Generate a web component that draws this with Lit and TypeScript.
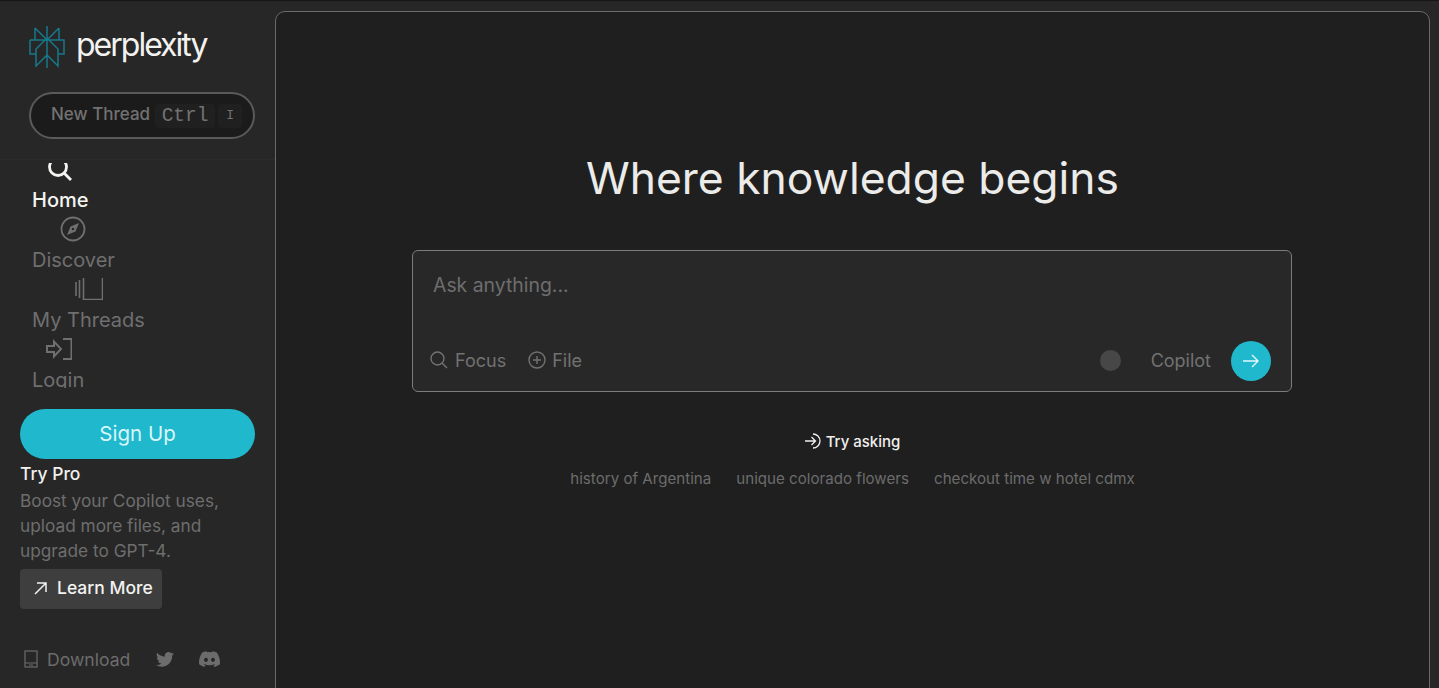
import { LitElement, html, css } from "lit";
import { customElement } from "lit/decorators.js";

@customElement("app-root")
export class AppRoot extends LitElement {
  static styles = css`
    :host { display: flex; width: 100%; height: 100vh; overflow: hidden; background: #272727; box-sizing: border-box;
      border-top: 1px solid #161616; font-family: Inter, "Noto Sans", sans-serif; color: #e8e8e6; }
    * { box-sizing: border-box; }
    svg { display: block; fill: none; stroke: currentColor; }
    .side { width: 275px; flex: none; display: flex; flex-direction: column; padding: 0 20px; }
    .logo { display: flex; gap: 11px; padding: 24px 0 0 10px; height: 91px; align-items: flex-start; color: #f2f2f0; }
    .logo svg { color: #17788a; flex: none; margin-left: -1px; }
    .word { font-size: 32px; letter-spacing: -2px; line-height: 40px; font-weight: 400; }
    .newthread { height: 47px; width: 226px; margin-left: 9px; border-radius: 24px; background: #1b1b1b; border: 2px solid #5a5a5a;
      display: flex; align-items: center; padding-left: 20px; color: #727272; font-size: 17px; font-weight: 500; white-space: nowrap; }
    .nt { margin-bottom: 3px; }
    .kbd { font-family: "Liberation Mono", "DejaVu Sans Mono", monospace; background: #202020; border-radius: 4px; color: #727272;
      display: flex; align-items: center; justify-content: center; height: 24px; font-weight: 400; }
    .k1 { margin-left: 5px; width: 60px; font-size: 19.5px; }
    .k2 { margin-left: 3px; width: 24px; font-size: 13px; }
    .rule { height: 1px; background: #2c2c2c; margin: 20px -20px 3px; }
    .nav { height: 225px; overflow: hidden; padding-left: 12px; flex: none; }
    .list { margin-top: -9px; display: flex; flex-direction: column; }
    .item { height: 60px; display: flex; flex-direction: column; align-items: center; width: max-content; color: #6f6f6f; font-size: 20px; font-weight: 400; }
    .item.on { color: #f4f4f2; font-weight: 500; }
    .ic { height: 30px; display: flex; align-items: center; }
    .lb { height: 30px; line-height: 32px; }
    .signup { margin-top: 21px; height: 50px; border-radius: 25px; background: #20b8cd; color: #d8f6fa; font-size: 20.5px; font-weight: 400;
      display: flex; align-items: center; justify-content: center; flex: none; padding-bottom: 2px; }
    .pro { margin-top: 4px; font-size: 17.5px; font-weight: 500; line-height: 22px; color: #f0f0ee; }
    .desc { margin-top: 3px; font-size: 17.25px; line-height: 25px; color: #6e6e6e; white-space: nowrap; }
    .learn { margin-top: 6px; width: 142px; height: 40px; border-radius: 4px; background: #3e3e3e; color: #f2f2f0; font-size: 17.5px; font-weight: 500;
      display: flex; align-items: center; padding: 0 0 3px 13px; gap: 8px; }
    .foot { margin-top: 35px; display: flex; align-items: center; color: #6c6c6c; font-size: 17.6px; padding-left: 4px; height: 30px; }
    .foot .dl { margin-left: 9px; }
    .tw { margin-left: 26px; fill: currentColor; stroke: none; }
    .dc { margin-left: 25px; fill: currentColor; stroke: none; }
    .main { flex: none; width: 1155px; margin-top: 10px; height: 700px; background: #1f1f1f; border: 1px solid #6a6a6a; border-radius: 10px;
      display: flex; flex-direction: column; align-items: center; }
    h1 { margin: 136px 0 0; font-size: 44.4px; font-weight: 400; line-height: 60px; color: #ebebe9; }
    .box { margin: 42px 1px 0 0; width: 880px; height: 142px; background: #282828; border: 1px solid #7c7c7c; border-radius: 6px; display: flex; flex-direction: column; padding: 0 20px 0 17px; }
    .ph { margin: 22px 0 0 3px; height: 24px; line-height: 24px; font-size: 19.4px; color: #6e6e6e; }
    .tools { margin-top: 44px; display: flex; align-items: center; height: 40px; color: #727272; font-size: 18px; }
    .tool { display: flex; align-items: center; gap: 7px; margin-right: 22px; margin-bottom: 2px; }
    .tool.file { gap: 6px; }
    .spacer { flex: 1; }
    .dot { width: 21px; height: 21px; border-radius: 50%; background: #474747; margin: 0 29px 2px 0; transform: translateX(-1px); }
    .lab { margin-bottom: 2px; }
    .send { width: 40px; height: 40px; border-radius: 50%; background: #20b8cd; color: #e4f8fb; display: flex; align-items: center; justify-content: center; margin-left: 20px; }
    .try { margin-top: 37px; display: flex; align-items: center; gap: 4px; font-size: 15px; font-weight: 500; color: #f0f0ee; height: 24px; }
    .sugg { margin-top: 16px; display: flex; gap: 25px; font-size: 15.13px; color: #6c6c6c; }
  `;

  private logo() {
    return html`<svg width="36" height="44" viewBox="0 0 36 44" stroke-width="1.5">
      <path d="M18 1V43M6 3L18 15L30 3M6 3V15M30 3V15M1 15H35V29H29M1 15V29H7M7 41V24L18 13L29 24V41L18 30L7 41Z"/>
    </svg>`;
  }

  render() {
    return html`
      <aside class="side">
        <div class="logo">${this.logo()}<span class="word">perplexity</span></div>
        <div class="newthread"><span class="nt">New Thread</span><span class="kbd k1">Ctrl</span><span class="kbd k2">I</span></div>
        <div class="rule"></div>
        <nav class="nav"><div class="list">
          <div class="item on"><span class="ic"><svg width="26" height="26" viewBox="0 0 26 26" stroke-width="2.8"><circle cx="11" cy="11" r="8.5"/><path d="M17 17L24 24"/></svg></span><span class="lb">Home</span></div>
          <div class="item"><span class="ic"><svg width="26" height="26" viewBox="0 0 26 26" stroke-width="1.8"><circle cx="13" cy="13" r="11.5"/><path fill-rule="evenodd" stroke="none" fill="currentColor" d="M19 7L15.500 15.500L7 19L10.500 10.500ZM13 11.800A1.200 1.200 0 1 0 13 14.200A1.200 1.200 0 1 0 13 11.800Z"/></svg></span><span class="lb">Discover</span></div>
          <div class="item"><span class="ic"><svg width="29" height="22" viewBox="0 0 29 22" stroke-width="1.6"><path d="M2 4V18M5.500 2V20M9.500 0V21.500H28.500V0"/></svg></span><span class="lb">My Threads</span></div>
          <div class="item"><span class="ic"><svg width="27" height="22" viewBox="0 0 27 22" stroke-width="2"><path d="M2 8H9V3.500L16 11L9 18.500V14H2Z"/><path d="M18 1H26.500V21H18"/></svg></span><span class="lb">Login</span></div>
        </div></nav>
        <div class="signup">Sign Up</div>
        <div class="pro">Try Pro</div>
        <div class="desc">Boost your Copilot uses,<br>upload more files, and<br>upgrade to GPT-4.</div>
        <div class="learn"><svg width="16" height="16" viewBox="0 0 16 16" stroke-width="1.5"><path d="M2 14L13 3M4 3H13V12"/></svg>Learn More</div>
        <div class="foot">
          <svg width="14" height="18" viewBox="0 0 14 18" stroke-width="1.2"><rect x="1" y="1" width="12" height="16"/><path d="M1 13H13M5 15H9"/></svg>
          <span class="dl">Download</span>
          <svg class="tw" width="18" height="15" viewBox="0 0 24 20"><path d="M24 2.400a10 10 0 0 1-2.800.8A5 5 0 0 0 23.300.5a10 10 0 0 1-3.100 1.200 4.900 4.900 0 0 0-8.400 4.500A14 14 0 0 1 1.700.9a4.900 4.900 0 0 0 1.500 6.600 4.900 4.900 0 0 1-2.200-.6c0 2.400 1.700 4.500 3.900 5a5 5 0 0 1-2.200.1 4.900 4.900 0 0 0 4.600 3.400A10 10 0 0 1 0 17.400 14 14 0 0 0 7.500 19.600c9.100 0 14.300-7.700 14-14.600A10 10 0 0 0 24 2.400Z"/></svg>
          <svg class="dc" width="21" height="16" viewBox="0 0 24 18"><path d="M20.300 1.500A20 20 0 0 0 15.400 0l-.6 1.300a18 18 0 0 0-5.500 0L8.600 0A20 20 0 0 0 3.700 1.500C.6 6.100-.3 10.600.1 15a20 20 0 0 0 6 3l1.300-2a13 13 0 0 1-2-1l.5-.4a14 14 0 0 0 12.200 0l.5.400a13 13 0 0 1-2 1l1.300 2a20 20 0 0 0 6-3c.5-5.100-.8-9.600-3.600-13.500ZM8 12.300c-1.200 0-2.200-1.100-2.200-2.400S6.800 7.500 8 7.500s2.200 1.100 2.200 2.400-1 2.400-2.200 2.400Zm8 0c-1.200 0-2.200-1.100-2.200-2.400s1-2.400 2.200-2.400 2.200 1.100 2.200 2.400-1 2.400-2.200 2.400Z"/></svg>
        </div>
      </aside>
      <main class="main">
        <h1>Where knowledge begins</h1>
        <div class="box">
          <div class="ph">Ask anything...</div>
          <div class="tools">
            <span class="tool"><svg width="18" height="18" viewBox="0 0 18 18" stroke-width="1.4"><circle cx="7.500" cy="7.500" r="6.500"/><path d="M12 12L17 17"/></svg>Focus</span>
            <span class="tool file"><svg width="18" height="18" viewBox="0 0 18 18" stroke-width="1.4"><circle cx="9" cy="9" r="8"/><path d="M9 5V13M5 9H13"/></svg>File</span>
            <span class="spacer"></span>
            <span class="dot"></span>
            <span class="lab">Copilot</span>
            <span class="send"><svg width="16" height="14" viewBox="0 0 16 14" stroke-width="1.4"><path d="M0 7H15M9 1L15 7L9 13"/></svg></span>
          </div>
        </div>
        <div class="try"><svg width="17" height="16" viewBox="0 0 17 16" stroke-width="1.3"><path d="M0 8H10M6.500 4L10.500 8L6.500 12M8 1A7 7 0 0 1 8 15"/></svg>Try asking</div>
        <div class="sugg"><span>history of Argentina</span><span>unique colorado flowers</span><span>checkout time w hotel cdmx</span></div>
      </main>
    `;
  }
}
